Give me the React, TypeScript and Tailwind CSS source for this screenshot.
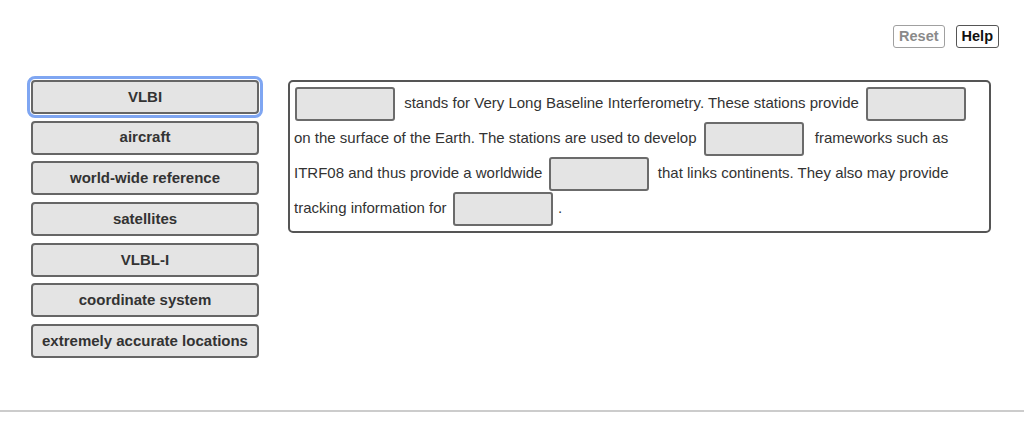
import React from 'react';

const choices = [
    'VLBI',
    'aircraft',
    'world-wide reference',
    'satellites',
    'VLBL-I',
    'coordinate system',
    'extremely accurate locations',
];

const Blank: React.FC<{ className?: string }> = ({ className = '' }) => (
    <span
        className={`inline-block w-[100px] h-[34px] -my-[4px] align-middle bg-[#e4e4e4] border-2 border-[#6b6b6b] rounded-[3px] ${className}`}
    />
);

const App: React.FC = () => {
    return (
        <div
            className="w-[1024px] h-[421px] bg-white flex flex-col text-[#333]"
            style={{ fontFamily: '"Liberation Sans", Arial, Helvetica, sans-serif' }}
        >
            <div className="flex justify-end gap-[11px] pt-[25px] pr-[25px]">
                <button className="h-[23px] px-[5px] text-[14.5px] font-bold text-[#8a8a8a] border border-[#a0a0a0] rounded-[3px] bg-white leading-none">
                    Reset
                </button>
                <button className="h-[23px] px-[5px] text-[14.5px] font-bold text-[#111] border border-[#555] rounded-[3px] bg-white leading-none">
                    Help
                </button>
            </div>

            <div className="flex items-start pl-[31px] pt-[32px] gap-[29px]">
                <div className="w-[228px] flex flex-col gap-[6.7px]">
                    {choices.map((c, i) => (
                        <div
                            key={c}
                            className={`h-[34px] flex items-center justify-center bg-[#e4e4e4] border-2 border-[#666] rounded-[4px] text-[15px] font-bold text-[#333] ${
                                i === 0 ? 'outline-[3px] outline-solid outline-[#7fa6f2] outline-offset-[1px]' : ''
                            }`}
                        >
                            {c}
                        </div>
                    ))}
                </div>

                <div className="w-[703px] border-2 border-[#555] rounded-[5px] px-[4px] pt-[3px] pb-[6px] text-[15px] leading-[35px] text-[#333]">
                    <Blank className="ml-px mr-[5px]" /> stands for Very Long Baseline Interferometry. These stations provide{' '}
                    <Blank className="ml-[3px]" />
                    <br />
                    on the surface of the Earth. The stations are used to develop <Blank className="ml-[3px] mr-[7px]" /> frameworks such as
                    <br />
                    ITRF08 and thus provide a worldwide <Blank className="ml-[2px] mr-[5px]" /> that links continents. They also may provide
                    <br />
                    tracking information for <Blank className="ml-[2px] mr-px" /> .
                </div>
            </div>

            <div className="mt-auto mb-[9px] h-[2px] bg-[#cccccc]" />
        </div>
    );
};

export default App;
